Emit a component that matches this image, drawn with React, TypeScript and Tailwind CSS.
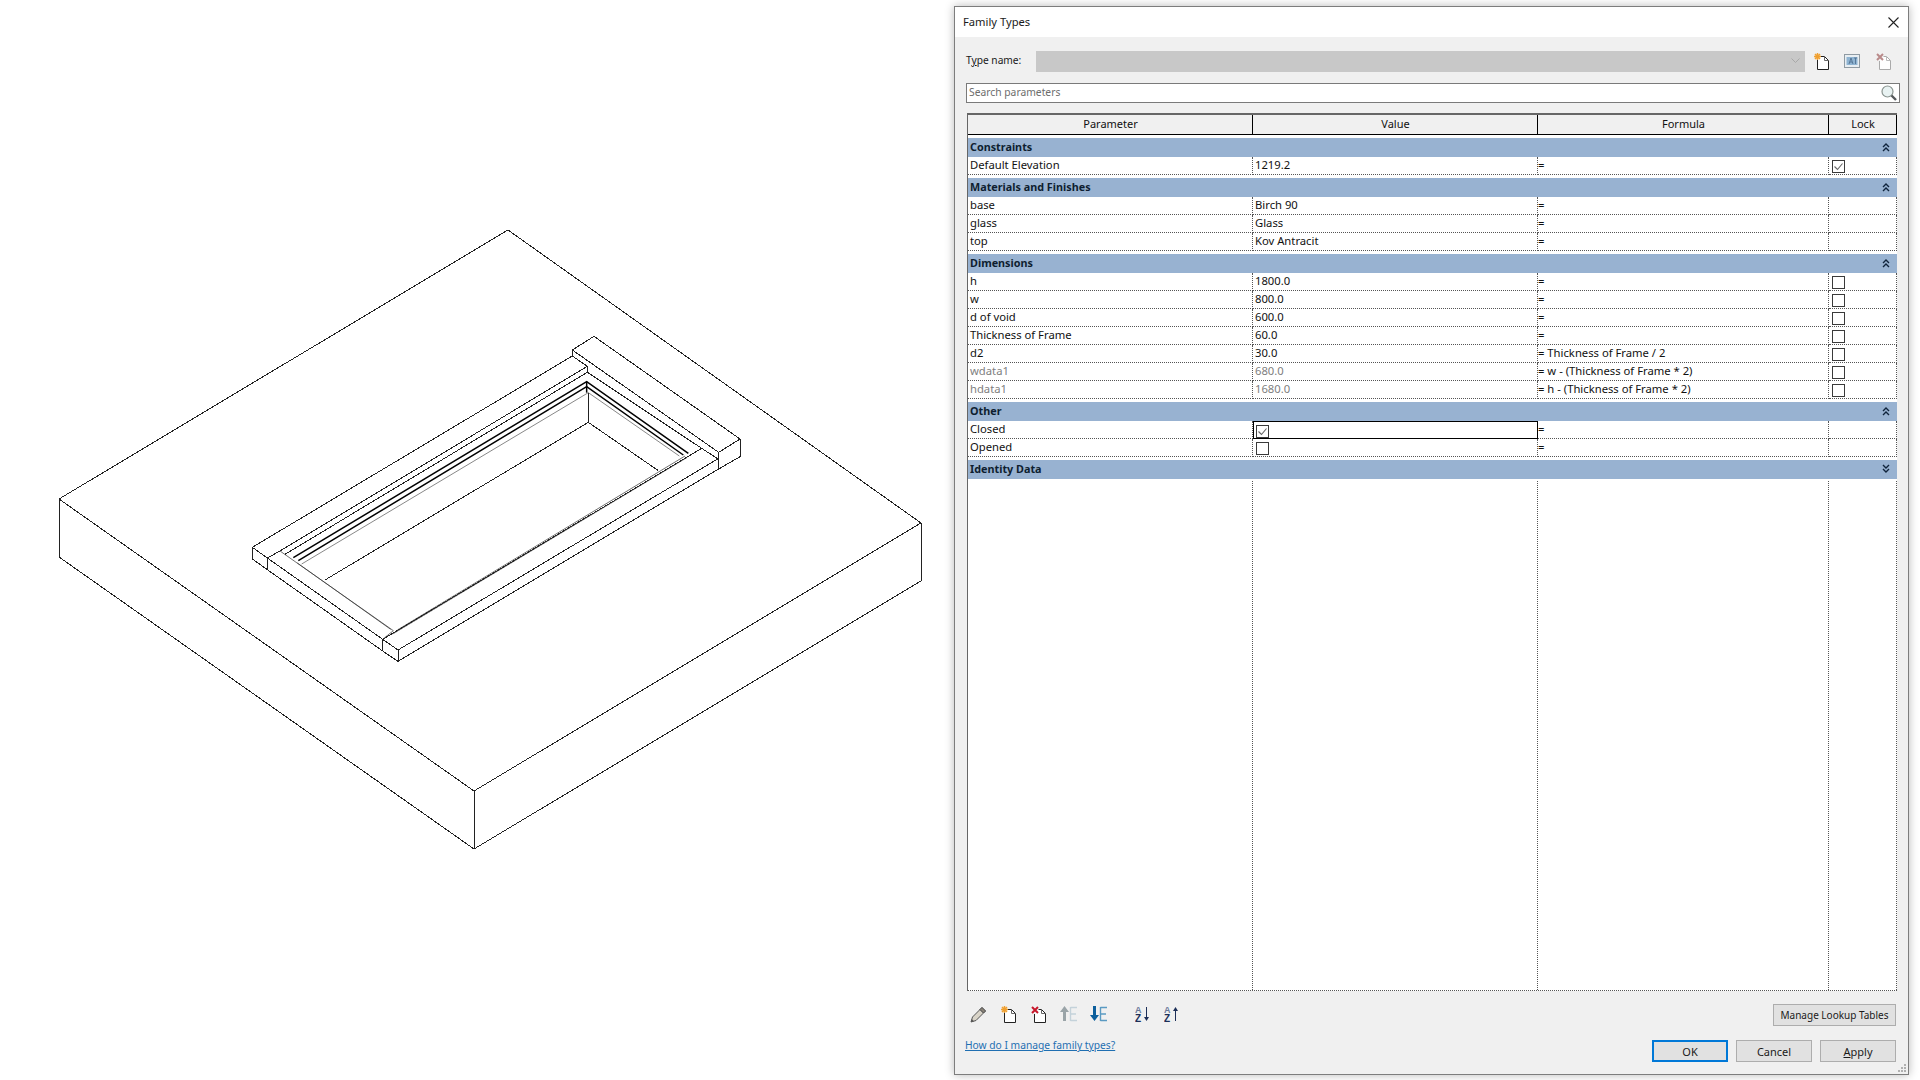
import React from "react";

const z7 = (p: number[]) => {
  const out: string[] = [];
  for (let i = 0; i < p.length; i += 2) out.push(`${240 + p[i] / 3},${320 + p[i + 1] / 3}`);
  return out.join(" ");
};

const thin: number[][] = [
  [37,682,997,108,997,90,1062,49,1500,357,1500,410,1436,447,1436,397,997,90],
  [1436,397,1500,357],
  [37,682,37,717,82,749,82,714,37,682],
  [82,714,428,958,428,993,474,1024,474,990,428,958],
  [82,749,428,993],
  [474,990,1436,415],
  [474,1024,1436,447],
  [428,958,1385,385,1436,418],
  [82,714,120,693,1042,139,997,108],
  [1042,139,1042,157,1385,385],
  [135,703,1042,157],
  [1045,218,1045,307,255,780],
  [1045,307,1255,452],
];
const fine: number[][] = [
  [120,693,460,932,428,958],
  [172,729,452,928],
  [472,930,1335,408],
  [458,942,1342,412],
];
const dark: number[][] = [
  [160,713,1040,185,1345,400],
  [175,722,1040,200,1330,405],
  [1040,185,1040,218],
];
const grey: number[][] = [[185,732,1045,218,1318,408]];

function Drawing() {
  return (
    <svg width="954" height="1080" viewBox="0 0 954 1080" fill="none" className="shrink-0">
      <g stroke="#222" strokeWidth="1" shapeRendering="crispEdges">
        <polyline points="59,499 508,230 921,523 921,581 474,849 474,791 59,499 59,557 474,849" />
        <line x1="474" y1="791" x2="921" y2="523" />
        {thin.map((p, i) => <polyline key={i} points={z7(p)} />)}
      </g>
      <g stroke="#333" strokeWidth="0.7">
        {fine.map((p, i) => <polyline key={i} points={z7(p)} />)}
        {grey.map((p, i) => <polyline key={i} points={z7(p)} stroke="#555" />)}
      </g>
      <g stroke="#000" strokeWidth="1.5">
        {dark.map((p, i) => <polyline key={i} points={z7(p)} />)}
      </g>
    </svg>
  );
}

const Chev = ({ down }: { down?: boolean }) => (
  <svg width="8" height="10" viewBox="0 0 8 10" fill="none" stroke="#10243c" strokeWidth="1.4" className="mb-[2px]">
    {down ? <path d="M1 1l3 3 3-3M1 5l3 3 3-3" /> : <path d="M1 5l3-3 3 3M1 9l3-3 3 3" />}
  </svg>
);

const Check = ({ on }: { on?: boolean }) => (
  <svg width="13" height="13" viewBox="0 0 13 13" fill="white" className="shrink-0">
    <rect x="0.5" y="0.5" width="12" height="12" stroke="#3a3a3a" />
    {on && <path d="M2.5 6.5l3 3 5-6" fill="none" stroke="#666" strokeWidth="1.1" />}
  </svg>
);

const NewDoc = () => (
  <svg width="15" height="17" viewBox="0 0 15 17" fill="none">
    <path d="M6.5 3.5H10.5L14.5 7.5V16.5H3.5V7" fill="#fff" stroke="#222" />
    <path d="M10.5 3.5V7.5H14.5" stroke="#666" />
    <g stroke="#f0a030" strokeWidth="1.5">
      <path d="M3.5 0v7M0 3.5h7M1 1l5 5M6 1l-5 5" />
    </g>
  </svg>
);

const DelDoc = ({ faded }: { faded?: boolean }) => (
  <svg width="15" height="17" viewBox="0 0 15 17" fill="none">
    <path d="M7.5 3.5H10.5L14.5 7.5V16.5H3.5V8" fill="#fff" stroke={faded ? "#aaa" : "#222"} />
    <path d="M10.5 3.5V7.5H14.5" stroke={faded ? "#bbb" : "#666"} />
    <path d="M1 1l6 6M7 1L1 7" stroke={faded ? "#b98a8a" : "#c8182c"} strokeWidth="2" />
  </svg>
);

const Pencil = () => (
  <svg width="17" height="17" viewBox="0 0 17 17" fill="none">
    <path d="M1 16l1.5-5L12 1.5l3.5 3.5L6 14.5z" fill="#d9d4c8" stroke="#555" />
    <path d="M10 3.5l3.5 3.5" stroke="#555" />
    <path d="M12 1.5l3.5 3.5-2 2L10 3.5z" fill="#8a8378" stroke="#555" />
    <path d="M1 16l.8-3 2.2 2.2z" fill="#555" />
  </svg>
);

const MoveIcon = ({ up }: { up?: boolean }) => {
  const c = up ? "#9aa4a8" : "#0c5f9c";
  const l = up ? "#c4d2da" : "#5a9ac2";
  return (
    <svg width="18" height="16" viewBox="0 0 18 16" fill="none">
      {up ? (
        <path d="M4.5 0L0 6h3v9h3V6h3z" fill={c} />
      ) : (
        <path d="M4.5 15L0 9h3V0h3v9h3z" fill={c} />
      )}
      <path d="M10.5 1v14M10.5 1.5H17M10.5 8H16M10.5 14.5H17" stroke={l} strokeWidth="1.4" />
    </svg>
  );
};

const SortIcon = ({ up }: { up?: boolean }) => (
  <svg width="15" height="16" viewBox="0 0 15 16" fill="none">
    <text x="0" y="7" fontSize="9" fontWeight="700" fontFamily="Liberation Sans" fill="#6a7a9a">A</text>
    <text x="0" y="15.5" fontSize="10" fontWeight="700" fontFamily="Liberation Sans" fill="#1c2f58">Z</text>
    {up ? (
      <path d="M11.5 1L9 5h2v10h1V5h2z" fill="#1c2f58" />
    ) : (
      <path d="M11.5 15L9 11h2V1h1v10h2z" fill="#1c2f58" />
    )}
  </svg>
);

const Rename = () => (
  <svg width="16" height="14" viewBox="0 0 16 14" fill="none">
    <rect x="0.5" y="0.5" width="15" height="13" fill="#e8eef2" stroke="#8f9aa2" />
    <rect x="2.5" y="3" width="11" height="8" fill="#8fb4d2" />
    <path d="M5 10l2-6 2 6M6 8h2M10 4h3M11.5 4v6" stroke="#4a6a8a" strokeWidth="0.8" />
  </svg>
);

const Magnifier = () => (
  <svg width="16" height="16" viewBox="0 0 16 16" fill="none">
    <circle cx="6.5" cy="6.5" r="5.5" fill="#e8f2f2" stroke="#8a9490" strokeWidth="1.2" />
    <path d="M10.5 10.5l4.5 4.5" stroke="#55595c" strokeWidth="2.4" />
  </svg>
);

type Row = { n: string; v?: string; f?: string; check?: "on" | "off"; lock?: "on" | "off"; dim?: boolean; sel?: boolean };

const groups: { title: string; down?: boolean; rows: Row[] }[] = [
  { title: "Constraints", rows: [{ n: "Default Elevation", v: "1219.2", f: "=", lock: "on" }] },
  {
    title: "Materials and Finishes",
    rows: [
      { n: "base", v: "Birch 90", f: "=" },
      { n: "glass", v: "Glass", f: "=" },
      { n: "top", v: "Kov Antracit", f: "=" },
    ],
  },
  {
    title: "Dimensions",
    rows: [
      { n: "h", v: "1800.0", f: "=", lock: "off" },
      { n: "w", v: "800.0", f: "=", lock: "off" },
      { n: "d of void", v: "600.0", f: "=", lock: "off" },
      { n: "Thickness of Frame", v: "60.0", f: "=", lock: "off" },
      { n: "d2", v: "30.0", f: "= Thickness of Frame / 2", lock: "off" },
      { n: "wdata1", v: "680.0", f: "= w - (Thickness of Frame * 2)", lock: "off", dim: true },
      { n: "hdata1", v: "1680.0", f: "= h - (Thickness of Frame * 2)", lock: "off", dim: true },
    ],
  },
  {
    title: "Other",
    rows: [
      { n: "Closed", check: "on", f: "=", sel: true },
      { n: "Opened", check: "off", f: "=" },
    ],
  },
];

const cell = "h-[18px] border-b border-r border-dotted border-[#555] flex items-center overflow-hidden whitespace-nowrap";

function GroupBar({ title, down }: { title: string; down?: boolean }) {
  return (
    <div className="mt-[3px] h-[19px] bg-[#98b2d1] flex items-center justify-between pl-[2px] pr-[7px] text-[10.8px] font-bold text-[#0e1e30]">
      <span className="pb-[1px]">{title}</span>
      <Chev down={down} />
    </div>
  );
}

function ParamRow({ r }: { r: Row }) {
  return (
    <div className={"grid grid-cols-[285px_285px_291px_68px] bg-white text-[11.25px] " + (r.dim ? "text-[#808080]" : "text-[#111]")}>
      <div className={cell + " pl-[2px] pb-[2px]"}>{r.n}</div>
      <div className={cell + " pl-[2px] " + (r.sel ? "border-[1.5px] border-solid border-black" : "pb-[2px]")}>
        {r.check ? <span className={(r.sel ? "" : "ml-[1px] ") + "mt-[3px] flex"}><Check on={r.check === "on"} /></span> : r.v}
      </div>
      <div className={cell + " pb-[2px] text-[#111]"}>{r.f}</div>
      <div className={cell + " pl-[3px]"}>
        {r.lock && <span className="mt-[2px] flex"><Check on={r.lock === "on"} /></span>}
      </div>
    </div>
  );
}

const Btn = ({ w, primary, children }: { w: string; primary?: boolean; children: React.ReactNode }) => (
  <div className={`${w} h-[22px] flex items-center justify-center bg-[#e1e1e1] text-[#1a1a1a] ${primary ? "border-2 border-[#0078d7]" : "border border-[#adadad]"}`}>
    {children}
  </div>
);

export default function App() {
  return (
    <div className="w-[1920px] h-[1080px] overflow-hidden bg-white flex font-['Noto_Sans',sans-serif] text-[11px] leading-none">
      <Drawing />
      <div className="mt-[6px] w-[955px] h-[1069px] shrink-0 flex flex-col bg-[#f0f0f0] border border-[#7d7d7d] shadow-[0_0_9px_rgba(0,0,0,0.28)]">
        <div className="h-[30px] bg-white flex items-center justify-between pl-[8px] pr-[9px] text-[11.2px] text-[#1a1a1a]">
          <span>Family Types</span>
          <svg width="11" height="11" viewBox="0 0 11 11" stroke="#222" strokeWidth="1.1"><path d="M0.5 0.5l10 10M10.5 0.5l-10 10" /></svg>
        </div>

        <div className="mt-[13px] h-[22px] flex items-center pl-[11px]">
          <span className="w-[70px] pb-[2px] text-[10.2px] text-[#1a1a1a]"><span>T</span><span className="underline">y</span><span>pe name:</span></span>
          <div className="w-[769px] h-[21px] bg-[#c8c8c8] flex items-center justify-end pr-[5px]">
            <svg width="9" height="6" viewBox="0 0 9 6" fill="none" stroke="#a8a8a8"><path d="M0.5 0.5l4 4 4-4" /></svg>
          </div>
          <span className="ml-[9px] flex"><NewDoc /></span>
          <span className="ml-[15px] flex"><Rename /></span>
          <span className="ml-[16px] flex"><DelDoc faded /></span>
        </div>

        <div className="mt-[11px] ml-[11px] w-[934px] h-[20px] bg-white border border-[#7a7a7a] flex items-center justify-between pl-[2px] pr-[2px] text-[10.3px] text-[#6d6d6d]">
          <span className="pb-[2px]">Search parameters</span>
          <Magnifier />
        </div>

        <div className="mt-[10px] ml-[12px] w-[930px] h-[878px] bg-white border-l border-t-2 border-[#666] flex flex-col">
          <div className="grid grid-cols-[285px_285px_291px_68px] h-[20px] bg-[#f0f0f0] border-b border-black text-[#111] shrink-0">
            {["Parameter", "Value", "Formula", "Lock"].map((h) => (
              <div key={h} className="flex items-center justify-center border-r border-black pb-[2px] pl-[1px]">{h}</div>
            ))}
          </div>
          {groups.map((g) => (
            <div key={g.title}>
              <GroupBar title={g.title} />
              {g.rows.map((r) => <ParamRow key={r.n} r={r} />)}
            </div>
          ))}
          <GroupBar title="Identity Data" down />
          <div className="mt-[2px] flex-1 grid grid-cols-[285px_285px_291px_68px] border-b border-dotted border-[#555]">
            <div className="border-r border-dotted border-[#555]" />
            <div className="border-r border-dotted border-[#555]" />
            <div className="border-r border-dotted border-[#555]" />
            <div className="border-r border-dotted border-[#555]" />
          </div>
        </div>

        <div className="mt-[12px] pl-[10px] pr-[12px] flex justify-between items-start">
          <div className="flex flex-col">
            <div className="flex items-center h-[22px] pl-[5px]">
              <Pencil />
              <span className="ml-[14px] flex"><NewDoc /></span>
              <span className="ml-[15px] flex"><DelDoc /></span>
              <span className="ml-[14px] flex"><MoveIcon up /></span>
              <span className="ml-[12px] flex"><MoveIcon /></span>
              <span className="ml-[27px] flex"><SortIcon /></span>
              <span className="ml-[14px] flex"><SortIcon up /></span>
            </div>
            <a className="mt-[15px] text-[10.25px] text-[#1f6fb2] underline">How do I manage family types?</a>
          </div>
          <div className="flex flex-col items-end mt-[1px]">
            <Btn w="w-[123px]"><span className="text-[10px]">Mana<span className="underline">g</span>e Lookup Tables</span></Btn>
            <div className="mt-[14px] flex gap-[8px]">
              <Btn w="w-[76px]" primary>OK</Btn>
              <Btn w="w-[76px]">Cancel</Btn>
              <Btn w="w-[76px]"><span><span className="underline">A</span>pply</span></Btn>
            </div>
          </div>
        </div>
        <div className="flex-1 flex items-end justify-end pr-[1px] pb-[1px]">
          <svg width="9" height="9" viewBox="0 0 9 9" fill="#b0b0b0">
            <rect x="6" y="0" width="2" height="2" />
            <rect x="3" y="3" width="2" height="2" /><rect x="6" y="3" width="2" height="2" />
            <rect x="0" y="6" width="2" height="2" /><rect x="3" y="6" width="2" height="2" /><rect x="6" y="6" width="2" height="2" />
          </svg>
        </div>
      </div>
    </div>
  );
}
